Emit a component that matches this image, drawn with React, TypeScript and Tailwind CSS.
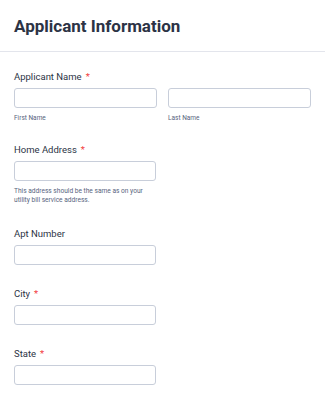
const Req = () => <span className="ml-[4px] text-[#f23a3c]">*</span>;

const Label = ({ text, required }: { text: string; required?: boolean }) => (
  <div className="text-[9.5px] leading-[12px] font-normal text-[#2c3345]">
    {text}
    {required && <Req />}
  </div>
);

const Input = () => (
  <input
    type="text"
    className="block h-[20px] w-full rounded-[3px] border border-[#c8ceda] bg-white"
  />
);

const App = () => {
  return (
    <div className="w-[325px] min-h-[400px] bg-white font-['Roboto',sans-serif]">
      <div className="h-[52px] border-b border-[#e3e5ec] px-[14px] pt-[16px]">
        <h1 className="text-[17px] leading-[20px] font-bold text-[#2c3345]">
          Applicant Information
        </h1>
      </div>
      <div className="px-[14px]">
        <div className="mt-[19px]">
          <Label text="Applicant Name" required />
          <div className="mt-[5px] grid grid-cols-2 gap-[11px]">
            <div>
              <Input />
              <div className="mt-[6px] text-[6.5px] leading-[8px] text-[#57647e]">First Name</div>
            </div>
            <div>
              <Input />
              <div className="mt-[6px] text-[6.5px] leading-[8px] text-[#57647e]">Last Name</div>
            </div>
          </div>
        </div>
        <div className="mt-[22px] w-[142px]">
          <Label text="Home Address" required />
          <div className="mt-[5px]">
            <Input />
          </div>
          <div className="mt-[6px] text-[6.6px] leading-[8.5px] text-[#57647e]">
            This address should be the same as on your utility bill service address.
          </div>
        </div>
        <div className="mt-[24px] w-[142px]">
          <Label text="Apt Number" />
          <div className="mt-[5px]">
            <Input />
          </div>
        </div>
        <div className="mt-[23px] w-[142px]">
          <Label text="City" required />
          <div className="mt-[5px]">
            <Input />
          </div>
        </div>
        <div className="mt-[23px] w-[142px]">
          <Label text="State" required />
          <div className="mt-[5px]">
            <Input />
          </div>
        </div>
      </div>
    </div>
  );
};

export default App;
